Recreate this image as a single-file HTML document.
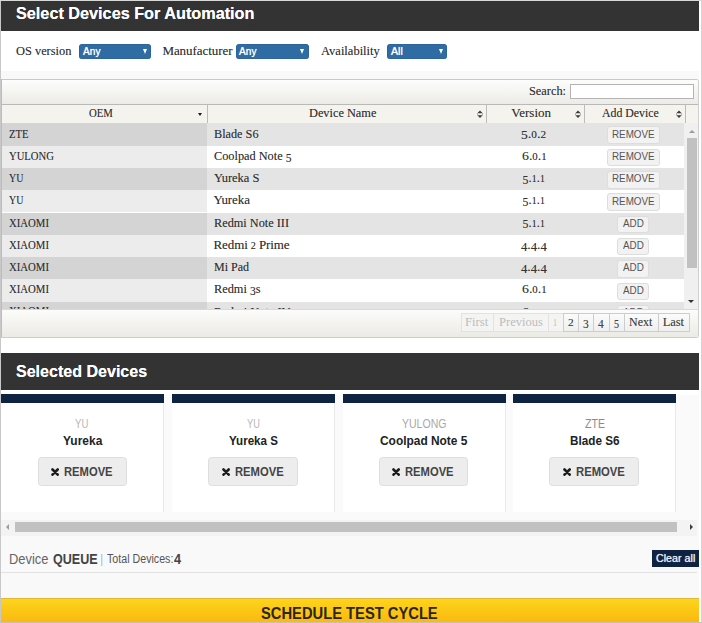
<!DOCTYPE html>
<html lang="en">
<head>
<meta charset="utf-8">
<title>Select Devices For Automation</title>
<style>

html,body{margin:0;padding:0;}
body{width:702px;height:623px;overflow:hidden;background:#fff;position:relative;font-family:"Liberation Sans",sans-serif;}
.abs,.t{position:absolute;}
.t{white-space:nowrap;line-height:1;margin:0;padding:0;transform-origin:0 0;}
.sans{font-family:"Liberation Sans",sans-serif;}
.serif{font-family:"Liberation Serif",serif;}
.dejavu{font-family:"DejaVu Sans",sans-serif;}
.d0{font-size:0.78em;}
.d1{position:relative;top:0.14em;font-size:0.94em;}
.clip{z-index:1;}
.ttl{text-shadow:0 0 0.6px rgba(255,255,255,0.85);}
.serif{text-shadow:0 0 0.3px rgba(60,60,60,0.45);}
.selt{text-shadow:0 0 0.7px rgba(255,255,255,0.9);}
.ptx{z-index:4;}
.nosh{text-shadow:none;}

#frame{position:absolute;left:0;top:0;width:699px;height:623px;background:#f9f9f9;}
#bl{position:absolute;left:0;top:0;width:1px;height:623px;background:#c8c8c8;}
#br{position:absolute;left:701px;top:0;width:1px;height:623px;background:#d4d4d4;}
#bt{position:absolute;left:0;top:0;width:702px;height:1px;background:#d8d8d8;}
.hdr{position:absolute;left:1px;width:698px;background:#333;}
#filters{position:absolute;left:1px;top:31px;width:698px;height:40px;background:#fff;}
.sel{position:absolute;top:44px;height:15px;background:#2f6ca3;border-radius:3.5px;box-shadow:0 0 0 0.6px #2a6094 inset;}
.sel i{position:absolute;right:4.6px;top:4.9px;width:0;height:0;border-left:2.8px solid transparent;border-right:2.8px solid transparent;border-top:5px solid #fff;}
#dt{position:absolute;left:1px;top:79px;width:698px;height:259px;border-top:1px solid #c9c9c9;border-right:1px solid #cfcfcf;border-bottom:1px solid #cdcdcd;border-radius:0 3px 3px 0;box-sizing:border-box;background:#fff;overflow:hidden;}
#dtbl{position:absolute;left:0px;top:79px;width:2px;height:258px;background:#bdbdbd;}
#sbar{position:absolute;left:0;top:0;width:697px;height:24px;background:linear-gradient(#fdfdfc,#ecebe6);}
#sinput{position:absolute;left:570px;top:84px;width:124px;height:15px;box-sizing:border-box;border:1px solid #b4b4b4;background:#fff;padding:0;margin:0;}
#thead{position:absolute;left:0;top:24px;width:697px;height:19px;background:#f4f3ee;border-top:1px solid #b9b9b9;border-bottom:1px solid #c4c4c4;box-sizing:content-box;}
.vsep{position:absolute;top:104px;width:1px;height:19.5px;background:#bcbcbc;}
.row{position:absolute;left:2px;width:683px;}
.odd{background:#e4e4e4;}
.even{background:#fff;}
.c1{position:absolute;left:0;top:0;width:205px;height:100%;}
.odd .c1{background:#d4d4d4;}
.even .c1{background:#ececec;}
.btn{position:absolute;box-sizing:border-box;height:17.6px;border:1px solid #dddddd;background:#f2f2f2;border-radius:3px;}
#vscroll{position:absolute;left:684px;top:123.3px;width:14.4px;height:186px;background:#f0f0f0;}
#vthumb{position:absolute;left:2.6px;top:14.9px;width:10px;height:130px;background:#c1c1c1;}
#tfoot{z-index:2;position:absolute;left:2px;top:309px;width:696px;height:28px;border-top:1px solid #d9d9d9;box-sizing:border-box;background:linear-gradient(#fcfcfa,#ebeae5);}
.pg{z-index:3;position:absolute;top:313.4px;height:19.1px;box-sizing:border-box;border:1px solid #cdcdcd;background:linear-gradient(#fbfbfb,#efefef);}
.pg.dis{border-color:#e2e2e2;background:#f4f4f2;}
#gap{position:absolute;left:1px;top:338px;width:698px;height:15px;background:#fff;}
#cards{position:absolute;left:1px;top:389.5px;width:698px;height:130.5px;background:linear-gradient(#fff 0,#fff 4.5px,#fafafa 4.5px);}
.card{position:absolute;top:393.9px;width:163.1px;height:118.1px;background:#fff;border-right:1px solid #e9e9e9;box-sizing:border-box;}
.card b{position:absolute;left:0;top:0;width:163.1px;height:8.9px;background:#0e2242;display:block;}
.rbtn{position:absolute;top:456.6px;height:29px;box-sizing:border-box;border:1px solid #dedede;border-radius:3.5px;background:#ededed;}
#hscroll{position:absolute;left:1px;top:520px;width:696px;height:15.5px;background:#f3f3f3;}
#hthumb{position:absolute;left:14px;top:1.7px;width:661.7px;height:10px;background:#c1c1c1;}
.tri{position:absolute;width:0;height:0;}
#hr{position:absolute;left:1px;top:572.2px;width:696px;height:1px;background:#e2e2e2;}
#clear{position:absolute;left:652.4px;top:549.5px;width:46.2px;height:17.9px;background:#0e2242;}
#sched{position:absolute;left:1px;top:597.6px;width:698px;height:24.6px;box-sizing:border-box;border-top:1px solid #e3b738;background:linear-gradient(#fdd41c,#fcc514 55%,#fbb813);}
#bb{position:absolute;left:0;top:622px;width:702px;height:1px;background:#c9c2ae;}

</style>
</head>
<body>
<div id="frame"></div>
<div class="hdr" style="top:1px;height:30px"></div>
<div id="filters"></div>
<div class="sel" style="left:79.4px;width:71.8px"><i></i></div>
<div class="sel" style="left:235.8px;width:73.2px"><i></i></div>
<div class="sel" style="left:387.4px;width:60.0px"><i></i></div>
<div id="dt"><div id="sbar"></div><div id="thead"></div></div>
<div id="sinput"></div>
<div class="vsep" style="left:207px"></div>
<div class="vsep" style="left:486px"></div>
<div class="vsep" style="left:584px"></div>
<div class="vsep" style="left:685px"></div>
<div class="row odd" style="top:123.30px;height:22.30px"><div class="c1"></div></div>
<div class="row even" style="top:145.60px;height:22.30px"><div class="c1"></div></div>
<div class="row odd" style="top:167.90px;height:22.30px"><div class="c1"></div></div>
<div class="row even" style="top:190.20px;height:22.30px"><div class="c1"></div></div>
<div class="row odd" style="top:212.50px;height:22.30px"><div class="c1"></div></div>
<div class="row even" style="top:234.80px;height:22.30px"><div class="c1"></div></div>
<div class="row odd" style="top:257.10px;height:22.30px"><div class="c1"></div></div>
<div class="row even" style="top:279.40px;height:22.30px"><div class="c1"></div></div>
<div class="row odd" style="top:301.70px;height:22.30px"><div class="c1"></div></div>
<div class="btn" style="left:606.6px;top:126.40px;width:53px"></div>
<div class="btn" style="left:606.6px;top:148.70px;width:53px"></div>
<div class="btn" style="left:606.6px;top:171.00px;width:53px"></div>
<div class="btn" style="left:606.6px;top:193.30px;width:53px"></div>
<div class="btn" style="left:617.4px;top:215.60px;width:31.2px"></div>
<div class="btn" style="left:617.4px;top:237.90px;width:31.2px"></div>
<div class="btn" style="left:617.4px;top:260.20px;width:31.2px"></div>
<div class="btn" style="left:617.4px;top:282.50px;width:31.2px"></div>
<div class="btn" style="left:617.4px;top:304.80px;width:31.2px"></div>
<div id="vscroll"><div id="vthumb"></div></div>
<div id="tfoot"></div>
<div class="pg dis" style="left:460.5px;width:33.8px"></div>
<div class="pg dis" style="left:493.3px;width:55.5px"></div>
<div class="pg dis" style="left:547.8px;width:16.0px"></div>
<div class="pg" style="left:562.8px;width:16.4px"></div>
<div class="pg" style="left:578.2px;width:15.8px"></div>
<div class="pg" style="left:593.0px;width:16.7px"></div>
<div class="pg" style="left:608.7px;width:16.1px"></div>
<div class="pg" style="left:623.8px;width:35.1px"></div>
<div class="pg" style="left:657.9px;width:31.9px"></div>
<div id="dtbl"></div>
<div id="gap"></div>
<div class="hdr" style="top:353px;height:37px"></div>
<div id="cards"></div>
<div class="card" style="left:1px"><b></b></div>
<div class="rbtn" style="left:37.6px;width:89.8px"></div>
<svg class="abs" style="left:51.0px;top:467.7px" width="8.2" height="8.2" viewBox="0 0 8.2 8.2"><path d="M1.5 1.5L6.7 6.7M6.7 1.5L1.5 6.7" stroke="#1c1c1c" stroke-width="2.6" stroke-linecap="round"/></svg>
<div class="card" style="left:171.9px"><b></b></div>
<div class="rbtn" style="left:208.1px;width:89.7px"></div>
<svg class="abs" style="left:221.9px;top:467.7px" width="8.2" height="8.2" viewBox="0 0 8.2 8.2"><path d="M1.5 1.5L6.7 6.7M6.7 1.5L1.5 6.7" stroke="#1c1c1c" stroke-width="2.6" stroke-linecap="round"/></svg>
<div class="card" style="left:342.6px"><b></b></div>
<div class="rbtn" style="left:378.5px;width:89.8px"></div>
<svg class="abs" style="left:392.4px;top:467.7px" width="8.2" height="8.2" viewBox="0 0 8.2 8.2"><path d="M1.5 1.5L6.7 6.7M6.7 1.5L1.5 6.7" stroke="#1c1c1c" stroke-width="2.6" stroke-linecap="round"/></svg>
<div class="card" style="left:513.3px"><b></b></div>
<div class="rbtn" style="left:549.4px;width:89.5px"></div>
<svg class="abs" style="left:563.3px;top:467.7px" width="8.2" height="8.2" viewBox="0 0 8.2 8.2"><path d="M1.5 1.5L6.7 6.7M6.7 1.5L1.5 6.7" stroke="#1c1c1c" stroke-width="2.6" stroke-linecap="round"/></svg>
<div id="hscroll"><div id="hthumb"></div></div>
<div id="hr"></div>
<div class="tri" style="left:198.2px;top:113px;border-left:2.7px solid transparent;border-right:2.7px solid transparent;border-top:3px solid #1a1a1a"></div>
<svg class="abs" style="left:477.3px;top:110px" width="6" height="8.4" viewBox="0 0 6 8.4"><path d="M3 0.5 L5.7 3.3 L0.3 3.3 Z M3 8 L5.7 5.2 L0.3 5.2 Z" fill="#3a3a3a"/><path d="M0.5 3.3V5.2M5.5 3.3V5.2" stroke="#9a9a9a" stroke-width="0.8"/></svg>
<svg class="abs" style="left:575.4px;top:110px" width="6" height="8.4" viewBox="0 0 6 8.4"><path d="M3 0.5 L5.7 3.3 L0.3 3.3 Z M3 8 L5.7 5.2 L0.3 5.2 Z" fill="#3a3a3a"/><path d="M0.5 3.3V5.2M5.5 3.3V5.2" stroke="#9a9a9a" stroke-width="0.8"/></svg>
<svg class="abs" style="left:675.8px;top:110px" width="6" height="8.4" viewBox="0 0 6 8.4"><path d="M3 0.5 L5.7 3.3 L0.3 3.3 Z M3 8 L5.7 5.2 L0.3 5.2 Z" fill="#3a3a3a"/><path d="M0.5 3.3V5.2M5.5 3.3V5.2" stroke="#9a9a9a" stroke-width="0.8"/></svg>
<div class="tri" style="left:688.5px;top:129.6px;border-left:3.2px solid transparent;border-right:3.2px solid transparent;border-bottom:3.4px solid #9c9c9c"></div>
<div class="tri" style="left:688.4px;top:299.7px;border-left:3px solid transparent;border-right:3px solid transparent;border-top:3.3px solid #333"></div>
<div class="tri" style="left:6.2px;top:523.9px;border-top:3px solid transparent;border-bottom:3px solid transparent;border-right:3.4px solid #9c9c9c"></div>
<div class="tri" style="left:690.2px;top:523.9px;border-top:3.1px solid transparent;border-bottom:3.1px solid transparent;border-left:3.8px solid #3c3c3c"></div>
<div id="clear"></div>
<div id="sched"></div>
<div id="bl"></div><div id="br"></div><div id="bt"></div><div id="bb"></div>
<span class="t sans ttl" id="t0" style="left:16.20px;top:5.11px;font-size:17px;color:#fff;letter-spacing:0.000px;font-weight:bold;transform:scaleX(0.9547);">Select Devices For Automation</span>
<span class="t sans ttl" id="t1" style="left:16.20px;top:362.81px;font-size:17px;color:#fff;letter-spacing:0.000px;font-weight:bold;transform:scaleX(0.9437);">Selected Devices</span>
<span class="t serif " id="t2" style="left:16.40px;top:43.91px;font-size:13px;color:#333;letter-spacing:0.000px;transform:scaleX(0.9529);">OS version</span>
<span class="t serif " id="t3" style="left:162.40px;top:43.91px;font-size:13px;color:#333;letter-spacing:-0.054px;">Manufacturer</span>
<span class="t serif " id="t4" style="left:320.70px;top:43.91px;font-size:13px;color:#333;letter-spacing:0.000px;transform:scaleX(0.9617);">Availability</span>
<span class="t sans selt" id="t5" style="left:83.10px;top:46.09px;font-size:11px;color:#fff;letter-spacing:0.000px;transform:scaleX(0.9226);">Any</span>
<span class="t sans selt" id="t6" style="left:239.00px;top:46.09px;font-size:11px;color:#fff;letter-spacing:0.000px;transform:scaleX(0.9226);">Any</span>
<span class="t sans selt" id="t7" style="left:390.80px;top:46.09px;font-size:11px;color:#fff;letter-spacing:0.000px;transform:scaleX(0.9645);">All</span>
<span class="t serif " id="t8" style="left:529.00px;top:84.11px;font-size:13px;color:#333;letter-spacing:0.000px;transform:scaleX(0.9491);">Search:</span>
<span class="t serif " id="t9" style="left:88.70px;top:106.95px;font-size:12px;color:#333;letter-spacing:0.000px;transform:scaleX(0.8961);">OEM</span>
<span class="t serif " id="t10" style="left:309.20px;top:106.11px;font-size:13px;color:#333;letter-spacing:0.000px;transform:scaleX(0.9478);">Device Name</span>
<span class="t serif " id="t11" style="left:511.30px;top:106.11px;font-size:13px;color:#333;letter-spacing:-0.003px;">Version</span>
<span class="t serif " id="t12" style="left:602.20px;top:106.11px;font-size:13px;color:#333;letter-spacing:0.000px;transform:scaleX(0.9095);">Add Device</span>
<span class="t serif " id="t13" style="left:8.50px;top:127.65px;font-size:12px;color:#333;letter-spacing:0.000px;transform:scaleX(0.8864);">ZTE</span>
<span class="t serif " id="t14" style="left:213.50px;top:126.81px;font-size:13px;color:#333;letter-spacing:0.000px;transform:scaleX(0.9406);">Blade S6</span>
<span class="t serif " id="t15" style="left:521.30px;top:127.83px;font-size:12.5px;color:#333;letter-spacing:0.000px;transform:scaleX(1.1520);"><span class="d1">5</span>.<span class="d0">0</span>.<span class="d0">2</span></span>
<span class="t sans " id="t16" style="left:612.40px;top:128.99px;font-size:11px;color:#555;letter-spacing:0.000px;transform:scaleX(0.8933);">REMOVE</span>
<span class="t serif " id="t17" style="left:8.50px;top:149.87px;font-size:12px;color:#333;letter-spacing:0.000px;transform:scaleX(0.8861);">YULONG</span>
<span class="t serif " id="t18" style="left:213.50px;top:149.03px;font-size:13px;color:#333;letter-spacing:0.000px;transform:scaleX(0.9458);">Coolpad Note <span class="d1">5</span></span>
<span class="t serif " id="t19" style="left:521.50px;top:150.05px;font-size:12.5px;color:#333;letter-spacing:0.000px;transform:scaleX(1.1056);">6.<span class="d0">0</span>.<span class="d0">1</span></span>
<span class="t sans " id="t20" style="left:612.40px;top:151.21px;font-size:11px;color:#555;letter-spacing:0.000px;transform:scaleX(0.8933);">REMOVE</span>
<span class="t serif " id="t21" style="left:8.50px;top:172.09px;font-size:12px;color:#333;letter-spacing:0.000px;transform:scaleX(0.8303);">YU</span>
<span class="t serif " id="t22" style="left:213.50px;top:171.25px;font-size:13px;color:#333;letter-spacing:0.000px;transform:scaleX(0.9620);">Yureka S</span>
<span class="t serif " id="t23" style="left:522.60px;top:172.27px;font-size:12.5px;color:#333;letter-spacing:0.105px;"><span class="d1">5</span>.<span class="d0">1</span>.<span class="d0">1</span></span>
<span class="t sans " id="t24" style="left:612.40px;top:173.43px;font-size:11px;color:#555;letter-spacing:0.000px;transform:scaleX(0.8933);">REMOVE</span>
<span class="t serif " id="t25" style="left:8.50px;top:194.31px;font-size:12px;color:#333;letter-spacing:0.000px;transform:scaleX(0.8303);">YU</span>
<span class="t serif " id="t26" style="left:213.50px;top:193.47px;font-size:13px;color:#333;letter-spacing:-0.055px;">Yureka</span>
<span class="t serif " id="t27" style="left:522.60px;top:194.49px;font-size:12.5px;color:#333;letter-spacing:0.105px;"><span class="d1">5</span>.<span class="d0">1</span>.<span class="d0">1</span></span>
<span class="t sans " id="t28" style="left:612.40px;top:195.65px;font-size:11px;color:#555;letter-spacing:0.000px;transform:scaleX(0.8933);">REMOVE</span>
<span class="t serif " id="t29" style="left:8.50px;top:216.53px;font-size:12px;color:#333;letter-spacing:0.000px;transform:scaleX(0.8954);">XIAOMI</span>
<span class="t serif " id="t30" style="left:213.50px;top:215.69px;font-size:13px;color:#333;letter-spacing:0.000px;transform:scaleX(0.9443);">Redmi Note III</span>
<span class="t serif " id="t31" style="left:522.60px;top:216.71px;font-size:12.5px;color:#333;letter-spacing:0.105px;"><span class="d1">5</span>.<span class="d0">1</span>.<span class="d0">1</span></span>
<span class="t sans " id="t32" style="left:623.00px;top:217.87px;font-size:11px;color:#555;letter-spacing:0.000px;transform:scaleX(0.8952);">ADD</span>
<span class="t serif " id="t33" style="left:8.50px;top:238.75px;font-size:12px;color:#333;letter-spacing:0.000px;transform:scaleX(0.8954);">XIAOMI</span>
<span class="t serif " id="t34" style="left:213.50px;top:237.91px;font-size:13px;color:#333;letter-spacing:-0.100px;">Redmi <span class="d0">2</span> Prime</span>
<span class="t serif " id="t35" style="left:520.90px;top:238.93px;font-size:12.5px;color:#333;letter-spacing:0.000px;transform:scaleX(1.0806);"><span class="d1">4</span>.<span class="d1">4</span>.<span class="d1">4</span></span>
<span class="t sans " id="t36" style="left:623.00px;top:240.09px;font-size:11px;color:#555;letter-spacing:0.000px;transform:scaleX(0.8952);">ADD</span>
<span class="t serif " id="t37" style="left:8.50px;top:260.97px;font-size:12px;color:#333;letter-spacing:0.000px;transform:scaleX(0.8954);">XIAOMI</span>
<span class="t serif " id="t38" style="left:213.50px;top:260.13px;font-size:13px;color:#333;letter-spacing:0.000px;transform:scaleX(0.9230);">Mi Pad</span>
<span class="t serif " id="t39" style="left:520.90px;top:261.15px;font-size:12.5px;color:#333;letter-spacing:0.000px;transform:scaleX(1.0806);"><span class="d1">4</span>.<span class="d1">4</span>.<span class="d1">4</span></span>
<span class="t sans " id="t40" style="left:623.00px;top:262.31px;font-size:11px;color:#555;letter-spacing:0.000px;transform:scaleX(0.8952);">ADD</span>
<span class="t serif " id="t41" style="left:8.50px;top:283.19px;font-size:12px;color:#333;letter-spacing:0.000px;transform:scaleX(0.8954);">XIAOMI</span>
<span class="t serif " id="t42" style="left:213.50px;top:282.35px;font-size:13px;color:#333;letter-spacing:0.000px;transform:scaleX(0.9472);">Redmi <span class="d1">3</span>s</span>
<span class="t serif " id="t43" style="left:521.50px;top:283.37px;font-size:12.5px;color:#333;letter-spacing:0.000px;transform:scaleX(1.1056);">6.<span class="d0">0</span>.<span class="d0">1</span></span>
<span class="t sans " id="t44" style="left:623.00px;top:284.53px;font-size:11px;color:#555;letter-spacing:0.000px;transform:scaleX(0.8952);">ADD</span>
<span class="t serif clip" id="t45" style="left:8.50px;top:305.41px;font-size:12px;color:#333;letter-spacing:0.000px;transform:scaleX(0.8954);">XIAOMI</span>
<span class="t serif clip" id="t46" style="left:213.50px;top:304.57px;font-size:13px;color:#333;letter-spacing:0.000px;transform:scaleX(0.9544);">Redmi Note IV</span>
<span class="t serif clip" id="t47" style="left:521.50px;top:305.59px;font-size:12.5px;color:#333;letter-spacing:0.000px;transform:scaleX(1.1056);">6.<span class="d0">0</span>.<span class="d0">1</span></span>
<span class="t sans clip" id="t48" style="left:623.00px;top:306.75px;font-size:11px;color:#555;letter-spacing:0.000px;transform:scaleX(0.8952);">ADD</span>
<span class="t serif ptx nosh" id="t49" style="left:464.90px;top:316.13px;font-size:12.5px;color:#bdbdbd;letter-spacing:0.113px;">First</span>
<span class="t serif ptx nosh" id="t50" style="left:499.00px;top:316.13px;font-size:12.5px;color:#bdbdbd;letter-spacing:0.031px;">Previous</span>
<span class="t serif ptx nosh" id="t51" style="left:552.80px;top:316.13px;font-size:12.5px;color:#bdbdbd;letter-spacing:0.000px;transform:scaleX(0.8205);"><span class="d0">1</span></span>
<span class="t serif ptx" id="t52" style="left:567.80px;top:316.13px;font-size:12.5px;color:#444;letter-spacing:0.000px;transform:scaleX(1.1692);"><span class="d0">2</span></span>
<span class="t serif ptx" id="t53" style="left:582.70px;top:316.13px;font-size:12.5px;color:#444;letter-spacing:0.000px;transform:scaleX(0.9702);"><span class="d1">3</span></span>
<span class="t serif ptx" id="t54" style="left:597.70px;top:316.13px;font-size:12.5px;color:#444;letter-spacing:0.000px;transform:scaleX(0.9702);"><span class="d1">4</span></span>
<span class="t serif ptx" id="t55" style="left:614.00px;top:316.13px;font-size:12.5px;color:#444;letter-spacing:0.000px;transform:scaleX(0.8511);"><span class="d1">5</span></span>
<span class="t serif ptx" id="t56" style="left:629.00px;top:316.13px;font-size:12.5px;color:#444;letter-spacing:0.000px;transform:scaleX(0.9584);">Next</span>
<span class="t serif ptx" id="t57" style="left:662.80px;top:316.13px;font-size:12.5px;color:#444;letter-spacing:-0.083px;">Last</span>
<span class="t sans " id="t58" style="left:75.20px;top:417.92px;font-size:12.5px;color:#b5b5b5;letter-spacing:0.000px;transform:scaleX(0.7655);">YU</span>
<span class="t sans " id="t59" style="left:62.60px;top:434.30px;font-size:13px;color:#222;letter-spacing:0.000px;font-weight:bold;transform:scaleX(0.9213);">Yureka</span>
<span class="t sans " id="t60" style="left:246.50px;top:417.92px;font-size:12.5px;color:#b5b5b5;letter-spacing:0.000px;transform:scaleX(0.7424);">YU</span>
<span class="t sans " id="t61" style="left:228.50px;top:434.30px;font-size:13px;color:#222;letter-spacing:0.000px;font-weight:bold;transform:scaleX(0.8901);">Yureka S</span>
<span class="t sans " id="t62" style="left:401.70px;top:417.92px;font-size:12.5px;color:#a8a8a8;letter-spacing:0.000px;transform:scaleX(0.8410);">YULONG</span>
<span class="t sans " id="t63" style="left:380.00px;top:434.30px;font-size:13px;color:#222;letter-spacing:0.000px;font-weight:bold;transform:scaleX(0.9167);">Coolpad Note 5</span>
<span class="t sans " id="t64" style="left:584.60px;top:417.92px;font-size:12.5px;color:#8c8c8c;letter-spacing:0.000px;transform:scaleX(0.8471);">ZTE</span>
<span class="t sans " id="t65" style="left:569.80px;top:434.30px;font-size:13px;color:#222;letter-spacing:0.000px;font-weight:bold;transform:scaleX(0.9013);">Blade S6</span>
<span class="t sans " id="t66" style="left:64.00px;top:465.40px;font-size:13px;color:#444;letter-spacing:0.000px;font-weight:bold;transform:scaleX(0.8626);">REMOVE</span>
<span class="t sans " id="t67" style="left:234.80px;top:465.40px;font-size:13px;color:#444;letter-spacing:0.000px;font-weight:bold;transform:scaleX(0.8643);">REMOVE</span>
<span class="t sans " id="t68" style="left:405.40px;top:465.40px;font-size:13px;color:#444;letter-spacing:0.000px;font-weight:bold;transform:scaleX(0.8626);">REMOVE</span>
<span class="t sans " id="t69" style="left:575.90px;top:465.40px;font-size:13px;color:#444;letter-spacing:0.000px;font-weight:bold;transform:scaleX(0.8679);">REMOVE</span>
<span class="t sans " id="t70" style="left:8.50px;top:551.75px;font-size:14px;color:#666;letter-spacing:0.000px;transform:scaleX(0.9206);">Device</span>
<span class="t sans " id="t71" style="left:52.70px;top:551.75px;font-size:14px;color:#444;letter-spacing:0.000px;font-weight:bold;transform:scaleX(0.8976);">QUEUE</span>
<span class="t sans " id="t72" style="left:101.30px;top:552.84px;font-size:12px;color:#666;letter-spacing:0.000px;transform:scaleX(0.4800);">|</span>
<span class="t sans " id="t73" style="left:106.80px;top:553.44px;font-size:12px;color:#555;letter-spacing:0.000px;transform:scaleX(0.8889);">Total Devices:</span>
<span class="t sans " id="t74" style="left:174.40px;top:551.75px;font-size:14px;color:#444;letter-spacing:0.000px;font-weight:bold;transform:scaleX(0.9106);">4</span>
<span class="t sans selt" id="t75" style="left:655.70px;top:553.49px;font-size:11px;color:#e6ebf3;letter-spacing:0.000px;transform:scaleX(0.9738);">Clear all</span>
<span class="t sans " id="t76" style="left:261.30px;top:606.26px;font-size:16px;color:#2b2616;letter-spacing:0.000px;font-weight:bold;transform:scaleX(0.9202);">SCHEDULE TEST CYCLE</span>
</body>
</html>
